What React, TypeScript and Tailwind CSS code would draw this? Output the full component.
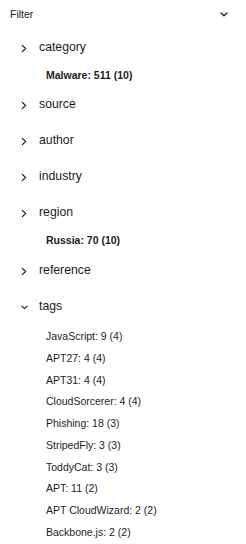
import React from 'react';

// ── Icons ─────────────────────────────────────────────────────────────────────

function ChevronRight() {
  return (
    <svg width="6" height="9" viewBox="0 0 6 9" fill="none" stroke="currentColor" strokeWidth="1.2" strokeLinecap="round" strokeLinejoin="round" aria-hidden="true">
      <path d="M1.3 1.4 4.6 4.5 1.3 7.6" />
    </svg>
  );
}

function ChevronDown({ w = 8 }: { w?: number }) {
  return (
    <svg width={w} height="5" viewBox="0 0 8 5" fill="none" stroke="currentColor" strokeWidth="1.3" strokeLinecap="round" strokeLinejoin="round" aria-hidden="true">
      <path d="M1 1 4 3.8 7 1" />
    </svg>
  );
}

// ── Data ──────────────────────────────────────────────────────────────────────

type Section = { name: string; open?: boolean; items: string[]; bold?: boolean };

const sections: Section[] = [
  { name: 'category', items: ['Malware: 511 (10)'], bold: true },
  { name: 'source', items: [] },
  { name: 'author', items: [] },
  { name: 'industry', items: [] },
  { name: 'region', items: ['Russia: 70 (10)'], bold: true },
  { name: 'reference', items: [] },
  {
    name: 'tags',
    open: true,
    items: [
      'JavaScript: 9 (4)',
      'APT27: 4 (4)',
      'APT31: 4 (4)',
      'CloudSorcerer: 4 (4)',
      'Phishing: 18 (3)',
      'StripedFly: 3 (3)',
      'ToddyCat: 3 (3)',
      'APT: 11 (2)',
      'APT CloudWizard: 2 (2)',
      'Backbone.js: 2 (2)',
    ],
  },
];

export default function App() {
  return (
    <div className="w-[246px] h-[544px] overflow-hidden bg-white text-[#1c1c1c] font-['Liberation_Sans',Arial,sans-serif]">
      {/* ── Header ─────────────────────────────────────────────────── */}
      <div className="flex items-center justify-between h-[29px] pl-[10px] pr-[18px]">
        <span className="text-[10.5px]">Filter</span>
        <ChevronDown />
      </div>

      {/* ── Sections ───────────────────────────────────────────────── */}
      <ul>
        {sections.map((s) => (
          <li key={s.name}>
            <div className="flex items-center h-[36px] pl-[21px]">
              <span className="w-[18px] flex items-center pt-[2px]">
                {s.open ? <ChevronDown w={7} /> : <ChevronRight />}
              </span>
              <span className="text-[12.25px]">{s.name}</span>
            </div>
            {s.items.length > 0 && (
              <ul className={s.open ? 'pt-[2px]' : ''}>
                {s.items.map((it) => (
                  <li
                    key={it}
                    className={`flex items-center pl-[46px] text-[10.5px] ${
                      s.bold ? 'font-bold h-[21.5px]' : 'h-[21.75px]'
                    }`}
                  >
                    {it}
                  </li>
                ))}
              </ul>
            )}
          </li>
        ))}
      </ul>
    </div>
  );
}
